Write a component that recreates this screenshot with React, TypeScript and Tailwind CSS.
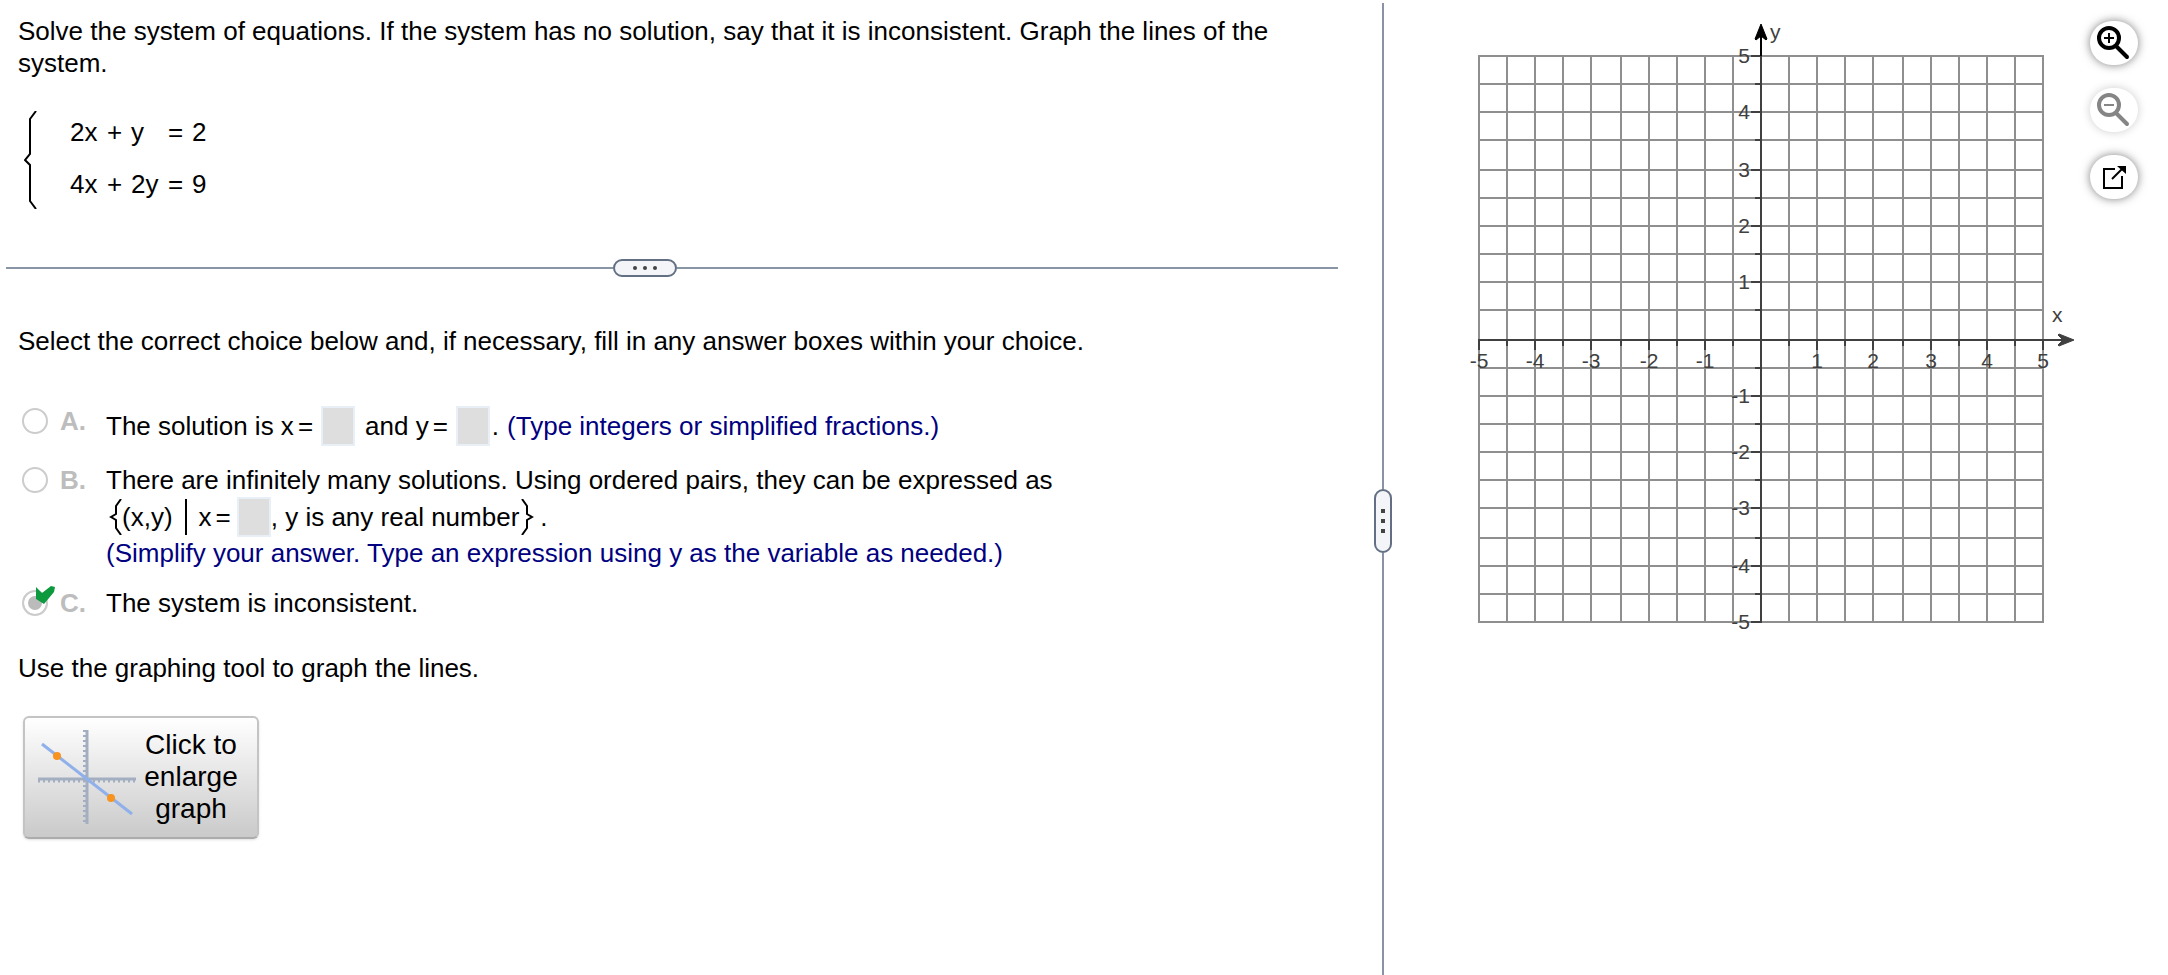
import React from 'react';

// Grid line coordinates, from -5 to 5 in half steps
const GRID_X = [1479, 1507, 1535, 1563, 1591, 1621, 1649, 1677, 1705, 1733, 1761, 1789, 1817, 1845, 1873, 1903, 1931, 1959, 1987, 2015, 2043];
const GRID_Y = [56, 84, 112, 140, 170, 198, 226, 254, 282, 310, 340, 368, 396, 424, 452, 480, 508, 538, 566, 594, 622];

const CoordinateGrid = () => (
    <svg viewBox="1460 20 620 620" className="w-[620px] h-[620px] shrink-0" role="img" aria-label="Coordinate grid from -5 to 5">
        <g stroke="#8f8f8f" strokeWidth="2">
            {GRID_X.map((x) => <line key={x} x1={x} x2={x} y1="55" y2="623" />)}
            {GRID_Y.map((y) => <line key={y} y1={y} y2={y} x1="1478" x2="2044" />)}
        </g>
        <g stroke="#404040" strokeWidth="2">
            <line x1="1478" x2="2066" y1="340" y2="340" />
            <line x1="1761" x2="1761" y1="56" y2="623" />
            {GRID_X.map((x, i) => i !== 10 && <line key={x} x1={x} x2={x} y1="340" y2={i % 2 ? 346 : 350} />)}
            {GRID_Y.map((y, i) => i !== 10 && <line key={y} y1={y} y2={y} x1={i % 2 ? 1755 : 1751} x2="1761" />)}
        </g>
        <line x1="1761" x2="1761" y1="34" y2="56" stroke="#000" strokeWidth="2" />
        <path d="M1761 24 L1767 39 L1766 40 L1761 36 L1756 40 L1755 39 Z" fill="#000" stroke="#000" />
        <path d="M2074 340 L2059 334 L2058 335 L2063 340 L2058 345 L2059 346 Z" fill="#404040" stroke="#404040" />
        <g fill="#404040" className="text-[21px] font-['Liberation_Sans',Arial,sans-serif]">
            {GRID_X.map((x, i) => i % 2 === 0 && i !== 10 && (
                <text key={x} x={x} y="368" textAnchor="middle">{i / 2 - 5}</text>
            ))}
            {GRID_Y.map((y, i) => i % 2 === 0 && i !== 10 && (
                <text key={y} x="1750" y={y + 7} textAnchor="end">{5 - i / 2}</text>
            ))}
            <text x="2052" y="322">x</text>
            <text x="1770" y="39">y</text>
        </g>
    </svg>
);

const GraphThumb = () => (
    <svg viewBox="36 730 100 96" className="w-[100px] h-24 shrink-0" aria-hidden="true">
        <path d="M86 731 V825 M37 780 H135" stroke="#a3afc1" strokeWidth="3" fill="none" />
        <path d="M84 731 V825" stroke="#a3afc1" strokeWidth="4" strokeDasharray="2 3" />
        <path d="M37 782 H135" stroke="#a3afc1" strokeWidth="3" strokeDasharray="2 3" />
        <path d="M41 745 L131 815" stroke="#8fb0ea" strokeWidth="3" />
        <circle cx="56" cy="757" r="4" fill="#f7931e" />
        <circle cx="110" cy="799" r="4" fill="#f7931e" />
    </svg>
);

const ZoomIcon = ({ plus }: { plus?: boolean }) => (
    <svg viewBox="0 0 48 44" className="w-12 h-11" aria-hidden="true" fill="none" stroke="currentColor">
        <circle cx="19" cy="17" r="10" strokeWidth="4" />
        <path d="M27 26 L37 36" strokeWidth="4" strokeLinecap="round" />
        <path d={plus ? 'M14 17 H24 M19 12 V22' : 'M14 17 H24'} strokeWidth="2" />
    </svg>
);

const PopOutIcon = () => (
    <svg viewBox="0 0 48 44" className="w-12 h-11" aria-hidden="true" fill="none" stroke="currentColor" strokeWidth="2">
        <path d="M25 14 H14 V33 H32 V21" />
        <path d="M22 24 L33 13" />
        <path d="M27 11 H36 V19 Z" fill="currentColor" stroke="none" />
    </svg>
);

const Blank = ({ label }: { label: string }) => (
    <input type="text" disabled aria-label={label} className="w-[34px] h-10 shrink-0 border-2 border-[#e9eff6] bg-[#dedede]" />
);

const Brace = ({ right }: { right?: boolean }) => (
    <svg viewBox="0 0 13 36" className="w-[13px] h-9 shrink-0" fill="none" stroke="#000" strokeWidth="2" aria-hidden="true">
        <path d={right ? 'M1 0 L6 7 V15 L11 18 L6 21 V29 L1 36' : 'M12 0 L7 7 V15 L2 18 L7 21 V29 L12 36'} />
    </svg>
);

const Choice = ({ letter, correct, children }: { letter: string; correct?: boolean; children: React.ReactNode }) => (
    <div className="flex items-start">
        <div className="relative flex items-center w-[88px] h-8 shrink-0 pl-1">
            <input
                id={`choice-${letter}`}
                type="radio"
                name="choice"
                disabled
                defaultChecked={correct}
                className="appearance-none w-[26px] h-[26px] rounded-full border-2 border-[#cccccc] bg-white checked:bg-[#bbbbbb] checked:shadow-[inset_0_0_0_4px_white]"
            />
            <label htmlFor={`choice-${letter}`} className="ml-3 font-bold text-[#bdbdbd]">{letter}.</label>
            {correct && (
                <svg viewBox="0 0 20 20" className="absolute left-[17px] -top-0.5 w-5 h-5" role="img" aria-label="Correct">
                    <path d="M1 2 L7 8 L16 1 L20 2 L19 7 L9 19 L1 14 Z" fill="#0d9a3f" />
                </svg>
            )}
        </div>
        <div>{children}</div>
    </div>
);

const roundButton = 'rounded-full bg-white w-12 h-11';

const App = () => {
    return (
        <main className="grid grid-cols-[1374fr_18px_776fr] min-h-screen bg-white text-black font-['Liberation_Sans',Arial,sans-serif] text-[26px] leading-8">
            <section className="pt-[15px] pl-[18px] pr-9">
                <p className="pr-10">
                    Solve the system of equations. If the system has no solution, say that it is inconsistent. Graph the lines of the system.
                </p>

                <div className="mt-8 flex items-center gap-[33px] pl-1.5">
                    <svg viewBox="0 0 13 98" className="w-[13px] h-[98px]" fill="none" stroke="#000" strokeWidth="2" aria-hidden="true">
                        <path d="M12 0 L6 8 V43 L1 49 L6 54 V90 L12 98" />
                    </svg>
                    <div className="grid grid-cols-[37px_24px_37px_24px_auto] gap-y-5 pb-1">
                        <span>2x</span><span>+</span><span>y</span><span>=</span><span>2</span>
                        <span>4x</span><span>+</span><span>2y</span><span>=</span><span>9</span>
                    </div>
                </div>

                <div className="mt-[50px] -ml-3 flex items-center">
                    <div className="grow-[607] h-0.5 bg-[#8795a5]" />
                    <button aria-label="Resize question" className="flex items-center justify-center gap-1.5 w-16 h-[18px] rounded-full border-2 border-[#637083] bg-[#f3f5f8]">
                        <span className="w-1 h-1 rounded-full bg-[#444444]" />
                        <span className="w-1 h-1 rounded-full bg-[#444444]" />
                        <span className="w-1 h-1 rounded-full bg-[#444444]" />
                    </button>
                    <div className="grow-[661] h-0.5 bg-[#8795a5]" />
                </div>

                <p className="mt-12">Select the correct choice below and, if necessary, fill in any answer boxes within your choice.</p>

                <div className="mt-12 flex flex-col gap-[18px]">
                    <Choice letter="A">
                        <div className="flex items-center h-[41px]">
                            <span>The solution is x</span>
                            <span className="ml-1">=</span>
                            <span className="mx-2 flex"><Blank label="x value" /></span>
                            <span className="ml-0.5">and y</span>
                            <span className="ml-1">=</span>
                            <span className="ml-2 mr-0.5 flex"><Blank label="y value" /></span>
                            <span>.</span>
                            <span className="ml-2 text-[#000080]">(Type integers or simplified fractions.)</span>
                        </div>
                    </Choice>
                    <Choice letter="B">
                        <p>There are infinitely many solutions. Using ordered pairs, they can be expressed as</p>
                        <div className="flex items-center h-[41px]">
                            <span className="ml-[3px] flex"><Brace /></span>
                            <span>(x,y)</span>
                            <span className="mx-3 w-0.5 h-9 bg-black" />
                            <span>x</span>
                            <span className="ml-1 mr-1.5">=</span>
                            <Blank label="x expression" />
                            <span className="mr-0.5">, y is any real number</span>
                            <Brace right />
                            <span className="ml-1.5">.</span>
                        </div>
                        <p className="text-[#000080]">(Simplify your answer. Type an expression using y as the variable as needed.)</p>
                    </Choice>
                    <Choice letter="C" correct>
                        <p>The system is inconsistent.</p>
                    </Choice>
                </div>

                <p className="mt-[33px]">Use the graphing tool to graph the lines.</p>

                <button className="mt-8 ml-[5px] flex items-center gap-1.5 w-[236px] h-[123px] pl-3 pb-0.5 rounded-md border-2 border-[#c4c4c4] border-b-[#acacac] bg-linear-to-b from-white to-[#cacaca] shadow-sm">
                    <GraphThumb />
                    <span className="w-24 text-center text-[28px]">Click to enlarge graph</span>
                </button>
            </section>

            <div className="pt-[3px] flex flex-col items-center">
                <div className="w-0.5 h-[486px] bg-[#8b92a6]" />
                <button aria-label="Resize panels" className="flex flex-col items-center justify-center gap-1.5 w-[18px] h-16 rounded-full border-2 border-[#637083] bg-[#f3f5f8]">
                    <span className="w-1 h-1 bg-[#444444]" />
                    <span className="w-1 h-1 bg-[#444444]" />
                    <span className="w-1 h-1 bg-[#444444]" />
                </button>
                <div className="w-0.5 grow bg-[#8b92a6]" />
            </div>

            <section className="pt-5 pl-[68px] pr-[30px] flex items-start justify-between">
                <CoordinateGrid />
                <div className="flex flex-col gap-[23px] pt-px">
                    <button aria-label="Zoom in" className={`${roundButton} shadow-[0_0_10px_rgba(0,0,0,0.5)]`}><ZoomIcon plus /></button>
                    <button aria-label="Zoom out" disabled className={`${roundButton} text-[#858585] shadow-[0_0_10px_rgba(0,0,0,0.2)]`}><ZoomIcon /></button>
                    <button aria-label="Open in new window" className={`${roundButton} shadow-[0_0_10px_rgba(0,0,0,0.5)]`}><PopOutIcon /></button>
                </div>
            </section>
        </main>
    );
};

export default App;
